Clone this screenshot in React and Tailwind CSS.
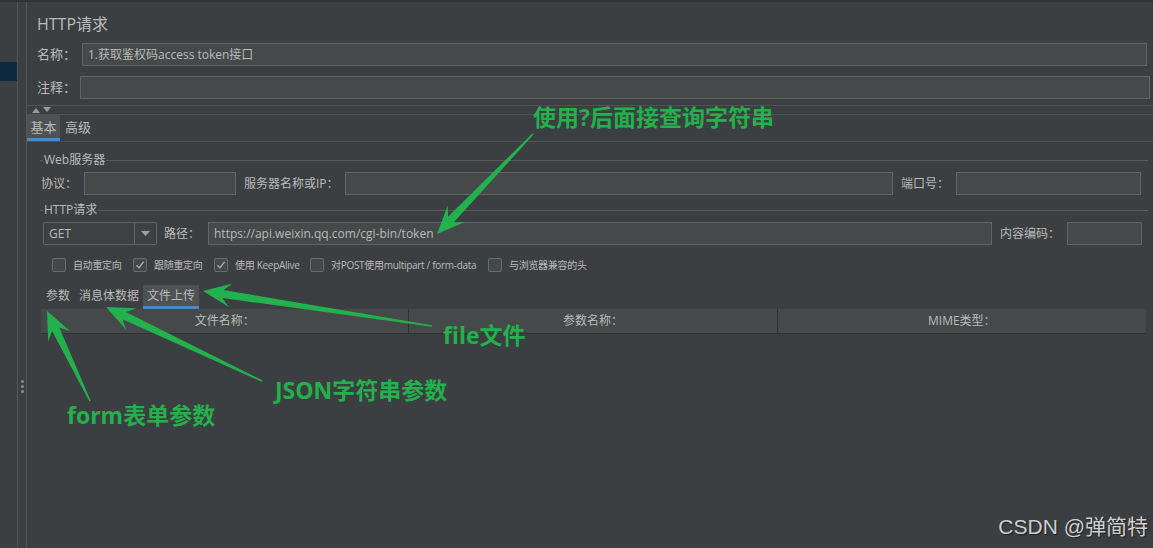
import React from 'react';

const GREEN = '#22b14c';

// tapered annotation arrow, tail -> tip
function arrowPoints([tx, ty], [hx, hy]) {
  const dx = hx - tx, dy = hy - ty;
  const len = Math.hypot(dx, dy);
  const ux = dx / len, uy = dy / len;
  const nx = -uy, ny = ux;
  const head = 28, neck = 4, barb = 12, tail = 0.8;
  const nk = [hx - ux * head * 0.72, hy - uy * head * 0.72];
  const bb = [hx - ux * head, hy - uy * head];
  const pts = [
    [tx + nx * tail, ty + ny * tail],
    [nk[0] + nx * neck, nk[1] + ny * neck],
    [bb[0] + nx * barb, bb[1] + ny * barb],
    [hx, hy],
    [bb[0] - nx * barb, bb[1] - ny * barb],
    [nk[0] - nx * neck, nk[1] - ny * neck],
    [tx - nx * tail, ty - ny * tail],
  ];
  return pts.map(p => p.map(v => v.toFixed(1)).join(',')).join(' ');
}

const arrows = [
  [[533, 134], [437, 234]],
  [[432, 326], [203, 291]],
  [[262, 381], [106, 307]],
  [[90, 401], [47, 311]],
];

const Field = ({ className = '', children }) => (
  <div className={`h-[23px] bg-[#45494a] border border-[#646464] flex items-center px-[5px] text-[#bbbbbb] ${className}`}>
    {children}
  </div>
);

const Group = ({ title }) => (
  <div className="h-[16px] ml-[13px] mr-[5px] flex items-center text-[12px] text-[#bbbbbb]">
    <div className="w-[3px] h-px bg-[#5a5a5a]" />
    <span className="px-[1px] leading-none">{title}</span>
    <div className="flex-1 h-px bg-[#5a5a5a]" />
  </div>
);

const Check = ({ label, checked, w }) => (
  <div className="flex items-center shrink-0" style={{ width: w }}>
    <div className="w-[14px] h-[14px] shrink-0 border border-[#6b6b6b] bg-[#43494a] rounded-[2px] flex items-center justify-center">
      {checked && (
        <svg width="10" height="10" viewBox="0 0 10 10">
          <path d="M1.5 5.2 L4 7.8 L8.6 1.8" fill="none" stroke="#a9a9a9" strokeWidth="1.4" />
        </svg>
      )}
    </div>
    <span className="ml-[7px] text-[10px] tracking-[-0.3px] text-[#bbbbbb] whitespace-nowrap">{label}</span>
  </div>
);

export default function App() {
  return (
    <div className="relative w-[1153px] h-[548px] overflow-hidden bg-[#3c3f41] font-['Open_Sans','Noto_Sans_CJK_SC',sans-serif] text-[#bbbbbb]">
      <div className="h-[2px] bg-[#313335]" />
      <div className="flex h-[546px]">
        {/* left tool strip */}
        <div className="w-[18px] border-r border-[#555555] pt-[60px]">
          <div className="h-[19px] bg-[#0d293e]" />
        </div>
        <div className="w-[9px] border-r border-[#555555] flex flex-col items-center pt-[378px] gap-[2px]">
          <div className="w-[3px] h-[3px] rounded-full bg-[#8c8c8c]" />
          <div className="w-[3px] h-[3px] rounded-full bg-[#8c8c8c]" />
          <div className="w-[3px] h-[3px] rounded-full bg-[#8c8c8c]" />
        </div>

        {/* main panel */}
        <div className="flex-1 flex flex-col">
          <div className="mt-[12px] ml-[10px] h-[20px] leading-[20px] text-[16px]">HTTP请求</div>

          <div className="mt-[9px] ml-[10px] mr-[6px] flex items-center text-[13px]">
            <span className="w-[45px]">名称：</span>
            <Field className="flex-1 text-[12px]">1.获取鉴权码access token接口</Field>
          </div>
          <div className="mt-[10px] ml-[10px] mr-[3px] flex items-center text-[13px]">
            <span className="w-[43px]">注释：</span>
            <Field className="flex-1" />
          </div>

          <div className="mt-[6px] h-px bg-[#515151]" />
          <div className="h-[8px] flex items-center pl-[5px] gap-[3px]">
            <svg width="8" height="6" viewBox="0 0 8 6"><path d="M0 6 L4 1 L8 6 Z" fill="#9a9a9a" /></svg>
            <svg width="8" height="6" viewBox="0 0 8 6"><path d="M0 0 L8 0 L4 5 Z" fill="#9a9a9a" /></svg>
          </div>
          <div className="h-px bg-[#515151]" />

          <div className="h-[26px] flex text-[13px]">
            <div className="w-[33px] bg-[#4e5254] border-b-[3px] border-[#4a88c7] flex items-center justify-center pt-[3px]">基本</div>
            <div className="w-[36px] flex items-center justify-center">高级</div>
          </div>
          <div className="h-px bg-[#515151]" />

          <div className="mt-[10px]"><Group title="Web服务器" /></div>
          <div className="mt-[4px] ml-[14px] mr-[12px] flex items-center text-[12px]">
            <span className="w-[43px]">协议：</span>
            <Field className="w-[152px]" />
            <span className="ml-[8px] w-[101px]">服务器名称或IP：</span>
            <Field className="flex-1" />
            <span className="ml-[8px] w-[55px]">端口号：</span>
            <Field className="w-[185px]" />
          </div>

          <div className="mt-[7px]"><Group title="HTTP请求" /></div>
          <div className="mt-[4px] ml-[16px] mr-[11px] flex items-center text-[12px]">
            <div className="w-[114px] h-[23px] border border-[#646464] rounded-[2px] bg-[#3e4143] flex">
              <span className="flex-1 flex items-center pl-[5px]">GET</span>
              <div className="w-[22px] border-l border-[#646464] flex items-center justify-center">
                <svg width="9" height="5" viewBox="0 0 9 5"><path d="M0 0 L9 0 L4.5 5 Z" fill="#a0a0a0" /></svg>
              </div>
            </div>
            <span className="ml-[7px] w-[44px]">路径：</span>
            <Field className="flex-1">https://api.weixin.qq.com/cgi-bin/token</Field>
            <span className="ml-[8px] w-[67px]">内容编码：</span>
            <Field className="w-[75px]" />
          </div>

          <div className="mt-[13px] ml-[25px] h-[14px] flex">
            <Check label="自动重定向" w={81} />
            <Check label="跟随重定向" checked w={81} />
            <Check label="使用 KeepAlive" checked w={96} />
            <Check label="对POST使用multipart / form-data" w={178} />
            <Check label="与浏览器兼容的头" w={120} />
          </div>

          <div className="mt-[13px] ml-[14px] h-[24px] flex text-[12px]">
            <div className="w-[34px] flex items-center justify-center pb-[3px]">参数</div>
            <div className="w-[68px] flex items-center justify-center pb-[3px]">消息体数据</div>
            <div className="w-[56px] bg-[#4e5254] border-b-[3px] border-[#4a88c7] flex items-center justify-center">文件上传</div>
          </div>
          <div className="ml-[14px] mr-[7px] h-[25px] grid grid-cols-3 bg-[#45494a] border-b border-[#323232] text-[12px]">
            <div className="flex items-center justify-center border-r border-[#323232]">文件名称：</div>
            <div className="flex items-center justify-center border-r border-[#323232]">参数名称：</div>
            <div className="flex items-center justify-center">MIME类型：</div>
          </div>
        </div>
      </div>

      {/* annotations */}
      <svg className="absolute inset-0 pointer-events-none" width="1153" height="548">
        {arrows.map(([t, h], i) => (
          <polygon key={i} points={arrowPoints(t, h)} fill={GREEN} />
        ))}
      </svg>
      <div className="absolute left-[533px] top-[103px] text-[23px] font-bold leading-[28px] text-[#22b14c]">使用?后面接查询字符串</div>
      <div className="absolute left-[443px] top-[321px] text-[23px] font-bold leading-[28px] text-[#22b14c]">file文件</div>
      <div className="absolute left-[275px] top-[376px] text-[23px] font-bold leading-[28px] text-[#22b14c]">JSON字符串参数</div>
      <div className="absolute left-[67px] top-[401px] text-[23px] font-bold leading-[28px] text-[#22b14c]">form表单参数</div>

      <div className="absolute right-[5px] bottom-[9px] text-[21px] leading-[24px] text-[#cfcfcf] font-['Liberation_Sans','Noto_Sans_CJK_SC',sans-serif] [text-shadow:1px_1px_1px_#1e1e1e]">CSDN @弹简特</div>
    </div>
  );
}
